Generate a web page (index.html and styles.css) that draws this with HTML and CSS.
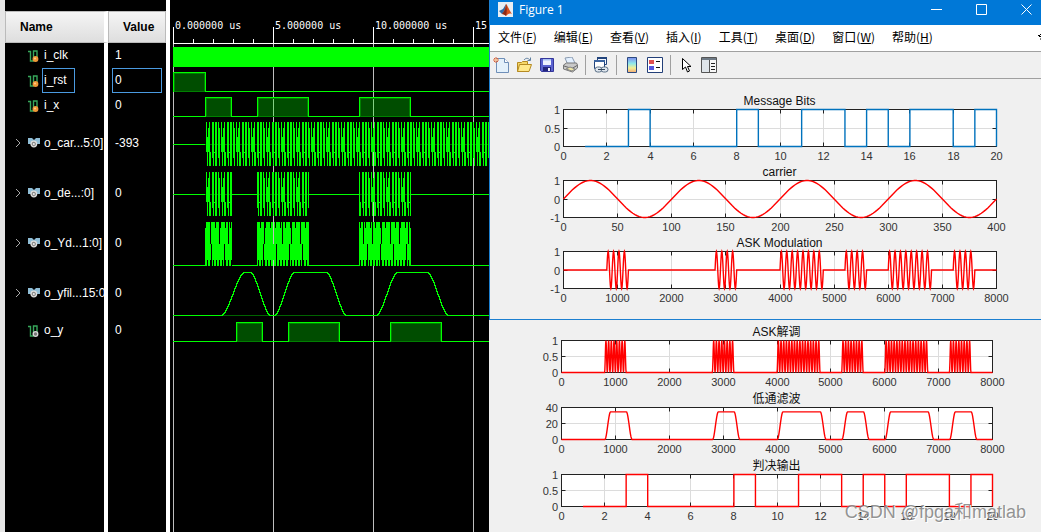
FILE: index.html
```
<!DOCTYPE html>
<html lang="zh-CN">
<head>
    <meta charset="UTF-8">
    <meta name="viewport" content="width=device-width, initial-scale=1.0">
    <title>ASK</title>
    <link rel="stylesheet" href="styles.css">
</head>
<body>
    <!-- shared icons -->
    <svg width="0" height="0" class="defs" aria-hidden="true">
        <symbol id="icon-in" viewBox="0 0 12 12">
            <path d="M0 1.5h2.500v9.500h3v-10h3.500v6" fill="none" stroke="#37a75b" stroke-width="1.400"/>
            <circle cx="7.500" cy="9" r="2.900" fill="#f09838"/>
            <circle cx="7" cy="8.600" r="1" fill="#ffd08a"/>
        </symbol>
        <symbol id="icon-out" viewBox="0 0 12 12">
            <path d="M0 1.5h2.500v9.500h3v-10h3.500v6" fill="none" stroke="#37a75b" stroke-width="1.400"/>
            <circle cx="7.500" cy="9" r="2.300" fill="#777" stroke="#d8d8d8" stroke-width="1.300"/>
        </symbol>
        <symbol id="icon-bus" viewBox="0 0 12 12">
            <path d="M0 1h4l2 2 2-2h4v6H9L6 4 3 7H0z" fill="#8fbdd6"/>
            <circle cx="5.800" cy="7" r="2.800" fill="#888" stroke="#ddd" stroke-width="1.300"/>
            <circle cx="5.800" cy="7" r="1" fill="#eee"/>
        </symbol>
    </svg>

    <div class="screen">
        <!-- Signal list -->
        <div class="signals">
            <table>
                <thead>
                    <tr><th class="name">Name</th><th class="value">Value</th></tr>
                </thead>
                <tbody>
                    <tr>
                        <td><div class="cell"><svg class="icon"><use href="#icon-in"/></svg><span>i_clk</span></div></td>
                        <td><div class="val">1</div></td>
                    </tr>
                    <tr class="selected">
                        <td><div class="cell"><svg class="icon"><use href="#icon-in"/></svg><span>i_rst</span></div></td>
                        <td><div class="val">0</div></td>
                    </tr>
                    <tr>
                        <td><div class="cell"><svg class="icon"><use href="#icon-in"/></svg><span>i_x</span></div></td>
                        <td><div class="val">0</div></td>
                    </tr>
                    <tr class="bus">
                        <td><div class="cell"><button class="expand" aria-label="expand"><svg viewBox="0 0 6 10"><path d="M1 1l4 4-4 4"/></svg></button><svg class="icon"><use href="#icon-bus"/></svg><span>o_car...5:0]</span></div></td>
                        <td><div class="val">-393</div></td>
                    </tr>
                    <tr class="bus">
                        <td><div class="cell"><button class="expand" aria-label="expand"><svg viewBox="0 0 6 10"><path d="M1 1l4 4-4 4"/></svg></button><svg class="icon"><use href="#icon-bus"/></svg><span>o_de...:0]</span></div></td>
                        <td><div class="val">0</div></td>
                    </tr>
                    <tr class="bus">
                        <td><div class="cell"><button class="expand" aria-label="expand"><svg viewBox="0 0 6 10"><path d="M1 1l4 4-4 4"/></svg></button><svg class="icon"><use href="#icon-bus"/></svg><span>o_Yd...1:0]</span></div></td>
                        <td><div class="val">0</div></td>
                    </tr>
                    <tr class="bus">
                        <td><div class="cell"><button class="expand" aria-label="expand"><svg viewBox="0 0 6 10"><path d="M1 1l4 4-4 4"/></svg></button><svg class="icon"><use href="#icon-bus"/></svg><span>o_yfil...15:0</span></div></td>
                        <td><div class="val">0</div></td>
                    </tr>
                    <tr>
                        <td><div class="cell"><svg class="icon"><use href="#icon-out"/></svg><span>o_y</span></div></td>
                        <td><div class="val">0</div></td>
                    </tr>
                    <tr class="filler"><td></td><td></td></tr>
                </tbody>
            </table>
        </div>

        <!-- Waveforms, drawn in script.js -->
        <div class="waves"><svg id="waves"></svg></div>

        <div class="figures">
            <div class="window">
                <div class="titlebar">
                    <svg class="logo" viewBox="0 0 15 15">
                        <path d="M0 0h15v15H0z" fill="#e9eef3"/>
                        <path d="M1 9l4-2 3-5-1 8-3 2z" fill="#2b6aa8"/>
                        <path d="M8 2c1 0 3 6 6 10-3-1-4 0-6 2-1-1-2-2-4-2 2-2 3-5 4-10z" fill="#d9501e"/>
                        <path d="M8 2c0 4-1 7-4 10 2 0 3 1 4 2 1-4 1-8 0-12z" fill="#8a2a17"/>
                    </svg>
                    <span class="title">Figure 1</span>
                    <button aria-label="minimize"><svg viewBox="0 0 11 11"><path d="M0 5.5h11"/></svg></button>
                    <button aria-label="maximize"><svg viewBox="0 0 11 11"><path d="M.5 .5h10v10H.5z"/></svg></button>
                    <button aria-label="close"><svg viewBox="0 0 11 11"><path d="M.5 .5l10 10M10.5 .5l-10 10"/></svg></button>
                </div>
                <div class="menubar">
                    <button>文件(<u>F</u>)</button>
                    <button>编辑(<u>E</u>)</button>
                    <button>查看(<u>V</u>)</button>
                    <button>插入(<u>I</u>)</button>
                    <button>工具(<u>T</u>)</button>
                    <button>桌面(<u>D</u>)</button>
                    <button>窗口(<u>W</u>)</button>
                    <button>帮助(<u>H</u>)</button>
                    <svg class="dock" viewBox="0 0 3 6"><path d="M0 1.5h2M1 2.5h2M2 .5h1M2 5h1" stroke="#000" fill="none"/></svg>
                </div>
                <div class="toolbar">
                    <button aria-label="new"><svg viewBox="0 0 16 16">
                        <path d="M3.500 1.500h8l4 4v10h-12z" fill="#e4f1fb" stroke="#6f8fb8"/>
                        <path d="M11.500 1.500v4h4" fill="#fff" stroke="#6f8fb8"/>
                        <path d="M3 0v6M0 3h6M1 1l4 4M5 1l-4 4" stroke="#d9623a"/><circle cx="3" cy="3" r="1" fill="#ffe9b0"/>
                    </svg></button>
                    <button aria-label="open"><svg viewBox="0 0 16 16">
                        <path d="M1.500 14.500v-9h4l1-1h5v3" fill="#f6d768" stroke="#b58a22"/>
                        <path d="M1.500 14.500l2-7h12l-2.500 7z" fill="#ffe88a" stroke="#b58a22"/>
                        <path d="M8 3c2-2.500 4-2 6 0M14.500 .5v3h-3" fill="none" stroke="#5f7fa0"/>
                    </svg></button>
                    <button aria-label="save"><svg viewBox="0 0 16 16">
                        <path d="M1.500 1.500h13v13h-12l-1-1z" fill="#5b63d0" stroke="#34369a"/>
                        <path d="M4 2h8v6H4z" fill="#eef2ff"/><path d="M4 2h8v1.500H4z" fill="#a9c1f2"/>
                        <path d="M4 10h8v4H4z" fill="#23257c"/><path d="M9 11h2v3H9z" fill="#f2f2ff"/>
                    </svg></button>
                    <button aria-label="print"><svg viewBox="0 0 16 16">
                        <path d="M3 1l7-1 3 6-7 2z" fill="#e3f0ff" stroke="#8a9bb0"/>
                        <path d="M1.500 8l3-2 10 0 1 2v3l-5 4-9-3z" fill="#c9c9c9" stroke="#777"/>
                        <path d="M2 9l8 2.500 5-3" fill="none" stroke="#666"/>
                        <path d="M4 12l6 2 3-2-5-2z" fill="#efe7a8" stroke="#888"/>
                    </svg></button>
                    <i></i>
                    <button aria-label="link plot"><svg viewBox="0 0 16 16">
                        <path d="M4.500 .5h9v7h-9z" fill="#f3f8ff" stroke="#22447c"/><path d="M4 0h10v2H4z" fill="#22447c"/>
                        <path d="M1.500 3.500h10v8h-10z" fill="#fff" stroke="#22447c"/><path d="M1 3h11v2H1z" fill="#3b64a0"/>
                        <rect x="2" y="10" width="7" height="5" rx="2.500" fill="#dfe6ee" stroke="#5b7086"/>
                        <rect x="8" y="10" width="7" height="5" rx="2.500" fill="#dfe6ee" stroke="#5b7086"/>
                        <path d="M5 12.500h7" stroke="#33475c"/>
                    </svg></button>
                    <i></i>
                    <button aria-label="colorbar"><svg viewBox="0 0 16 16">
                        <defs><linearGradient id="bar" x2="0" y2="1"><stop offset="0" stop-color="#7e8cf0"/><stop offset=".4" stop-color="#8fe8ea"/><stop offset=".7" stop-color="#f4ef94"/><stop offset="1" stop-color="#f2a978"/></linearGradient></defs>
                        <path d="M3.500 .5h9v15h-9z" fill="url(#bar)" stroke="#2c4a80"/>
                    </svg></button>
                    <button aria-label="legend"><svg viewBox="0 0 16 16">
                        <path d="M.5 .5h15v15H.5z" fill="#fff" stroke="#223f78"/>
                        <path d="M2 3h5v4H2z" fill="#e05050"/><path d="M2 9h5v4H2z" fill="#5658e0"/>
                        <path d="M9 4.500h4M9 10.500h4" stroke="#111"/>
                    </svg></button>
                    <i></i>
                    <button aria-label="edit plot"><svg viewBox="0 0 16 16">
                        <path d="M4.500 1.500v11l3-2.500 2 5 2-1-2-4.500h3.500z" fill="#fff" stroke="#000"/>
                    </svg></button>
                    <button aria-label="properties"><svg viewBox="0 0 16 16">
                        <path d="M.5 .5h15v15H.5z" fill="#dfe5ea" stroke="#555"/><path d="M1 1h14v2H1z" fill="#6e7a86"/>
                        <path d="M8.500 3v12" stroke="#555"/><path d="M9 3h6v12H9z" fill="#f8f8f8"/>
                        <path d="M10 6.500h4M10 9.500h4M10 12.500h4" stroke="#222"/>
                    </svg></button>
                </div>
                <div class="charts">
                    <svg class="chart" data-chart="bits"></svg>
                    <svg class="chart" data-chart="carrier"></svg>
                    <svg class="chart" data-chart="ask"></svg>
                </div>
            </div>
            <div class="charts second">
                <svg class="chart" data-chart="demod"></svg>
                <svg class="chart" data-chart="lowpass"></svg>
                <svg class="chart" data-chart="output"></svg>
            </div>
        </div>
        <div class="watermark">CSDN @fpga和matlab</div>
    </div>
    <script src="script.js"></script>
</body>
</html>
```
FILE: styles.css
```
* {
    box-sizing: border-box;
}

body {
    margin: 0;
    background: #000;
    font-family: "Liberation Sans", Arial, "Noto Sans CJK SC", sans-serif;
    font-size: 12px;
}

button {
    border: 0;
    padding: 0;
    background: none;
    font: inherit;
    color: inherit;
}

svg {
    display: block;
}

.defs {
    position: absolute;
}

.screen {
    position: relative;
    display: grid;
    grid-template-columns: 170px 319fr 552fr;
    min-height: 100vh;
    overflow: hidden;
}

/* signal list */
.signals {
    display: flex;
    padding-top: 11px;
    background: #000;
    border-left: 5px solid #e6e6e6;
    border-right: 4px solid #fff;
    color: #fff;
}

.signals table {
    width: 100%;
    table-layout: fixed;
    border-collapse: separate;
    border-spacing: 0;
}

.signals th {
    height: 32px;
    padding: 0 0 0 14px;
    text-align: left;
    color: #000;
    background: linear-gradient(#f5f5f5, #dedede);
    border: 1px solid #bbb;
}

.signals .name {
    width: 103px;
}

.signals td {
    height: 25px;
    padding: 0;
    overflow: hidden;
}

.signals tr > :first-child {
    border-right: 4px solid #fff;
}

.signals .bus td {
    height: 50px;
}

.signals .filler td {
    height: auto;
}

.cell {
    display: flex;
    align-items: center;
    padding-left: 23px;
    white-space: nowrap;
}

.bus .cell {
    padding-left: 10px;
}

.cell span {
    margin-left: 2px;
    padding: 0 1px;
    line-height: 23px;
    border: 1px solid transparent;
}

.icon {
    flex: none;
    width: 12px;
    height: 12px;
}

.expand {
    flex: none;
    width: 13px;
}

.expand svg {
    width: 6px;
    height: 10px;
    fill: none;
    stroke: #aaa;
}

.val {
    margin: 0 4px;
    padding: 0 2px;
    line-height: 23px;
    border: 1px solid transparent;
}

.selected span,
.selected .val {
    border-color: #4a9ae0;
}

.selected span {
    padding-right: 7px;
}

/* waveforms */
.waves {
    min-width: 0;
    overflow: hidden;
}

.waves svg {
    width: 100%;
    height: 100%;
    shape-rendering: crispEdges;
}

.waves text {
    font-family: "DejaVu Sans Mono", monospace;
    font-size: 10px;
    fill: #fff;
}

/* figure windows */
.figures {
    min-width: 0;
    background: #f0f0f0;
}

.window {
    border-left: 1px solid #1c7fd0;
    border-bottom: 1px solid #1c7fd0;
}

.titlebar {
    display: flex;
    align-items: center;
    gap: 34px;
    height: 25px;
    padding: 0 9px 6px 8px;
    background: #0078d7;
    color: #fff;
}

.titlebar .logo {
    width: 15px;
    height: 15px;
}

.titlebar .title {
    flex: 1;
    margin-left: -28px;
    font-family: "Open Sans", sans-serif;
}

.titlebar button svg {
    width: 11px;
    height: 11px;
    fill: none;
    stroke: #fff;
}

.menubar {
    display: flex;
    align-items: center;
    gap: 17px;
    height: 26px;
    padding: 0 0 2px 8px;
    background: #fff;
    color: #000;
    font-family: "Noto Sans CJK SC", sans-serif;
    line-height: 20px;
    white-space: nowrap;
}

.menubar .dock {
    width: 3px;
    height: 6px;
    margin-left: auto;
}

.toolbar {
    display: flex;
    align-items: center;
    gap: 7px;
    height: 28px;
    padding-left: 3px;
    border-top: 1px solid #a0a0a0;
    border-bottom: 1px solid #a0a0a0;
}

.toolbar svg {
    width: 16px;
    height: 16px;
}

.toolbar i {
    width: 1px;
    height: 20px;
    background: #a0a0a0;
}

.charts {
    padding: 13px 44px 14px 73px;
}

.chart {
    width: 100%;
    height: 71px;
    overflow: visible;
}

.second {
    padding: 3px 48px 0 72px;
}

.second .chart {
    height: 67px;
}

.chart text {
    font-size: 11px;
    fill: #333;
}

.chart .chart-title {
    font-size: 12px;
    fill: #111;
}

.watermark {
    position: absolute;
    right: 15px;
    bottom: 6px;
    font-size: 18px;
    line-height: 28px;
    color: rgba(120, 120, 120, 0.8);
    text-shadow: 1px 1px 0 #fff;
}
```
FILE: script.js
```
// bit k is high during [start, end)
const highBits = [[3, 4], [8, 9], [11, 13], [14, 15], [16, 18], [19, 20]]
const bursts = highBits.map(b => [(b[0] - 1) * 400, (b[1] - 1) * 400])

function smooth(t) {
    t = Math.max(0, Math.min(1, t))
    return t * t * (3 - 2 * t)
}

function isHigh(n) {
    return bursts.some(b => n >= b[0] && n < b[1])
}

function bitPoints() {
    const pts = [[1, 0]]
    highBits.forEach(b => pts.push([b[0], 0], [b[0], 1], [b[1], 1], [b[1], 0]))
    return pts
}

function sample(max, step, fn) {
    const pts = []
    for (let n = 0; n <= max; n += step) pts.push([n, fn(n)])
    return pts
}

function lowpass(n) {
    let v = 0
    bursts.forEach(b => {
        v = Math.max(v, 34.5 * smooth((n - b[0] - 5) / 105) * (1 - smooth((n - b[1] - 5) / 105)))
    })
    return v
}

const wave = n => Math.sin(n * 2 * Math.PI / 100)

const charts = {
    bits: { title: 'Message Bits', x: [20, 2], y: [0, 0.5, 1], color: '#0072bd', h: 37, pts: bitPoints() },
    carrier: { title: 'carrier', x: [400, 50], y: [-1, 0, 1], color: '#f00', h: 37, pts: sample(400, 2, wave) },
    ask: { title: 'ASK Modulation', x: [8000, 1000], y: [-1, 0, 1], color: '#f00', h: 37, pts: sample(8000, 5, n => isHigh(n) ? wave(n) : 0) },
    demod: { title: 'ASK解调', x: [8000, 1000], y: [0, 0.5, 1], color: '#f00', h: 32, pts: sample(8000, 5, n => isHigh(n) ? wave(n) ** 2 : 0) },
    lowpass: { title: '低通滤波', x: [8000, 1000], y: [0, 20, 40], color: '#f00', h: 32, pts: sample(8000, 10, lowpass) },
    output: { title: '判决输出', x: [20, 2], y: [0, 0.5, 1], color: '#f00', h: 32, pts: bitPoints() }
}

function drawChart(svg) {
    const c = charts[svg.dataset.chart]
    const w = Math.floor(svg.clientWidth) - 1
    const top = 17.5
    const bottom = top + c.h
    const yMin = c.y[0]
    const yMax = c.y[2]
    const px = v => 0.5 + v / c.x[0] * w
    const py = v => bottom - (v - yMin) / (yMax - yMin) * c.h
    let grid = ''
    let ticks = ''
    let labels = ''

    for (let v = 0; v <= c.x[0]; v += c.x[1]) {
        const x = Math.floor(px(v)) + 0.5
        grid += `M${x} ${top}V${bottom}`
        ticks += `M${x} ${top}v4M${x} ${bottom}v-4`
        labels += `<text x="${x}" y="${bottom + 13}" text-anchor="middle">${v}</text>`
    }
    c.y.forEach(v => {
        const y = Math.floor(py(v)) + 0.5
        grid += `M.5 ${y}h${w}`
        ticks += `M.5 ${y}h4M${w + 0.5} ${y}h-4`
        labels += `<text x="-3" y="${y + 4}" text-anchor="end">${v}</text>`
    })

    const line = c.pts.map(p => px(p[0]).toFixed(2) + ',' + py(p[1]).toFixed(2)).join(' ')
    svg.innerHTML = `
        <rect x=".5" y="${top}" width="${w}" height="${c.h}" fill="#fff"/>
        <path d="${grid}" stroke="#dcdcdc" fill="none"/>
        <rect x=".5" y="${top}" width="${w}" height="${c.h}" fill="none" stroke="#222"/>
        <path d="${ticks}" stroke="#222" fill="none"/>
        <polyline points="${line}" fill="none" stroke="${c.color}" stroke-width="1.4"/>
        <text class="chart-title" x="${w / 2}" y="13" text-anchor="middle">${c.title}</text>
        ${labels}`
}

// simulator waveforms: 20px per us, time 0 at x = 3
const x0 = 3
const gates = [[35, 61], [87, 138], [189, 240]]

function digital(pulses, low, width) {
    let d = `M${x0} ${low}.5`
    let fill = ''
    pulses.forEach(p => {
        d += `H${p[0]}.5V${low - 19}.5H${p[1]}.5V${low}.5`
        fill += `<rect x="${p[0] + 1.5}" y="${low - 17.5}" width="${p[1] - p[0] - 2}" height="18" fill="rgba(0,255,0,.3)" stroke="#008000"/>`
    })
    d += `H${width}`
    return fill + `<path d="${d}" fill="none" stroke="#0f0"/>`
}

function stepped(base, width, fn) {
    let d = `M${x0} ${base}.5`
    for (let x = x0; x < width; x++) {
        d += `H${x}.5V${Math.round(fn(x)) + 0.5}`
    }
    return `<path d="M${x0} ${base}.5H${width}" stroke="#006400"/><path d="${d}" fill="none" stroke="#0f0"/>`
}

function bars(base, width, active) {
    const levels = [-22, -16, -7, 8, 14, 22]
    let d = `M${x0} ${base}.5`
    let dim = `<path d="M${x0} ${base}.5H${width}" stroke="#006400"/>`
    for (let x = x0; x < width; x++) {
        if (!active(x)) {
            d += `M${x} ${base}.5h1`
            continue
        }
        const k = x % 3
        const beat = Math.floor(x / 3) % 5
        if (k === 0) d += `M${x}.5 ${base - 22}V${base + levels[5 - beat % 3]}`
        if (k === 1) d += `M${x}.5 ${base + levels[beat % 4]}V${base + 22}`
        if (k === 2 && beat === 2) d += `M${x}.5 ${base - 16}V${base + 8}`
        if (k === 2 && beat === 4) d += `M${x} ${base + 8}.5h1`
    }
    return dim + `<path d="${d}" fill="none" stroke="#0f0"/>`
}

function rectified(base, width, active) {
    let d = ''
    for (let x = x0; x < width; x++) {
        if (!active(x)) {
            d += `M${x} ${base}.5h1`
            continue
        }
        const top = x % 5 === 0 ? base - 37 : base - 43
        const bottom = x % 3 === 1 ? base - 5 : base + 1
        if (x % 9 === 4) d += `M${x}.5 ${base - 21}V${bottom}`
        else if (x % 13 === 2) d += `M${x}.5 ${top}V${base - 21}`
        else d += `M${x}.5 ${top}V${bottom}`
    }
    return `<path d="${d}" fill="none" stroke="#0f0"/>`
}

function drawWaves() {
    const svg = document.getElementById('waves')
    const width = svg.clientWidth
    const height = svg.clientHeight
    const gated = x => gates.some(g => x >= g[0] && x <= g[1])
    const humps = [[50, 74, 79, 100], [103, 124, 155, 176], [205, 227, 256, 278]]
    let out = ''

    for (let x = x0, n = 0; x < width; x += 20, n++) {
        if (n % 5 === 0) {
            out += `<path d="M${x}.5 27V44" stroke="#fff"/><path d="M${x}.5 44V${height}" stroke="#bebebe"/>`
            out += `<text x="${x + 2}" y="29">${n}.000000 us</text>`
        } else {
            out += `<path d="M${x}.5 39V44" stroke="#fff"/>`
        }
    }
    out += `<path d="M${x0} 43.5H${width}" stroke="#fff"/>`
    out += `<rect x="${x0}" y="47" width="${width}" height="20" fill="#0f0"/>`
    out += digital([[3, 35]], 91, width)
    out += digital(gates, 116, width)
    out += bars(144, width, x => x >= 35)
    out += bars(194, width, gated)
    out += rectified(265, width, gated)
    out += stepped(315, width, x => {
        let v = 0
        humps.forEach(h => {
            v = Math.max(v, smooth((x - h[0]) / (h[1] - h[0])) * (1 - smooth((x - h[2]) / (h[3] - h[2]))))
        })
        return 315 - 43 * v
    })
    out += digital([[66, 92], [118, 169], [220, 271]], 341, width)
    svg.innerHTML = out
}

function draw() {
    drawWaves()
    document.querySelectorAll('.chart').forEach(drawChart)
}

window.addEventListener('resize', draw)
draw()
```
